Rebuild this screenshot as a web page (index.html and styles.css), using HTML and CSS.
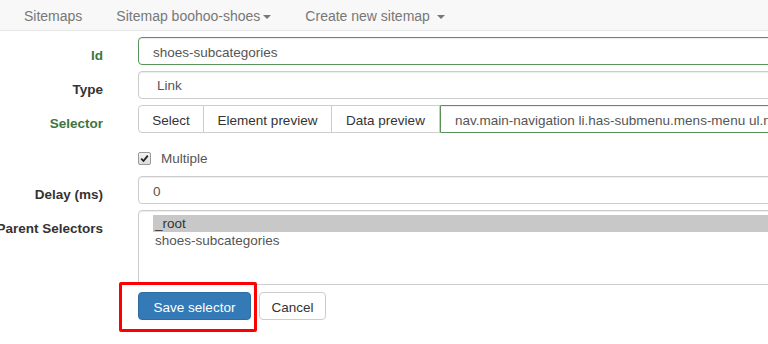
FILE: index.html
```html
<!DOCTYPE html>
<html lang="en">
<head>
<meta charset="UTF-8">
<title>Edit selector</title>
<link rel="stylesheet" href="styles.css">
</head>
<body>
<nav class="navbar">
  <a class="nav-item">Sitemaps</a>
  <a class="nav-item">Sitemap boohoo-shoes<b class="caret"></b></a>
  <a class="nav-item">Create new sitemap <b class="caret"></b></a>
</nav>

<form class="selector-form">
  <div class="form-group has-success">
    <label class="control-label">Id</label>
    <input class="form-control" type="text" value="shoes-subcategories">
  </div>

  <div class="form-group">
    <label class="control-label">Type</label>
    <div class="form-control type-select">Link</div>
  </div>

  <div class="form-group has-success">
    <label class="control-label">Selector</label>
    <div class="input-group">
      <button type="button" class="btn-seg first">Select</button>
      <button type="button" class="btn-seg">Element preview</button>
      <button type="button" class="btn-seg">Data preview</button>
      <input class="form-control seg-input" type="text" value="nav.main-navigation li.has-submenu.mens-menu ul.nav-sub li a">
    </div>
  </div>

  <div class="form-group check-group">
    <span></span>
    <label class="checkbox">
      <span class="check-box">
        <svg width="9" height="9" viewBox="0 0 9 9"><path d="M1.2 4.6 L3.5 7 L7.8 1.6" fill="none" stroke="#222" stroke-width="1.8"/></svg>
      </span>
      Multiple
    </label>
  </div>

  <div class="form-group">
    <label class="control-label">Delay (ms)</label>
    <input class="form-control" type="text" value="0">
  </div>

  <div class="form-group">
    <label class="control-label">Parent Selectors</label>
    <div class="form-control option-list">
      <div class="option selected">_root</div>
      <div class="option">shoes-subcategories</div>
    </div>
  </div>

  <div class="form-group button-row">
    <span></span>
    <div class="actions">
      <span class="highlight"><button type="button" class="btn btn-primary">Save selector</button></span>
      <button type="button" class="btn btn-default">Cancel</button>
    </div>
  </div>
</form>
</body>
</html>
```

FILE: styles.css
```css
* { box-sizing: border-box; margin: 0; padding: 0; }
html, body { width: 768px; height: 344px; overflow: hidden; }
body { font-family: 'Liberation Sans', Arial, sans-serif; font-size: 13.5px; color: #333; background: #fff; }

.navbar { height: 31px; background: #f8f8f8; border-bottom: 1px solid #e7e7e7; display: flex; align-items: center; padding: 1px 0 0 7px; }
.nav-item { padding: 0 17px; font-size: 14px; color: #777; line-height: 30px; white-space: nowrap; }
.caret { display: inline-block; width: 0; height: 0; margin-left: 3px; vertical-align: middle; border-top: 4px solid #777; border-left: 4px solid transparent; border-right: 4px solid transparent; }

.selector-form { width: 900px; margin-left: -16px; padding-top: 6px; }
.form-group { display: grid; grid-template-columns: 119px 1fr; column-gap: 35px; margin-bottom: 6px; }
.control-label { text-align: right; font-weight: bold; line-height: 18px; padding-top: 10px; white-space: nowrap; direction: rtl; }
.has-success .control-label { color: #3c763d; }

.form-control { display: block; width: 100%; height: 28px; padding: 2px 14px 0; font-family: inherit; font-size: 13.5px; color: #555; background: #fff; border: 1px solid #ccc; border-radius: 4px; box-shadow: inset 0 1px 1px rgba(0,0,0,.075); line-height: 24px; }
.has-success .form-control { border-color: #5a935a; }
.type-select { padding-left: 18px; }

.input-group { display: flex; height: 28px; }
.btn-seg { height: 28px; padding: 2px 0 0; background: #fff; border: 1px solid #ccc; border-left: none; font-family: inherit; font-size: 13.5px; color: #333; white-space: nowrap; text-align: center; }
.btn-seg.first { border-left: 1px solid #ccc; border-radius: 4px 0 0 4px; width: 66px; }
.btn-seg:nth-child(2) { width: 128px; }
.btn-seg:nth-child(3) { width: 108px; }
.has-success .seg-input { flex: 1; width: auto; border-radius: 0 4px 4px 0; }

.check-group { height: 31px; padding-top: 9px; margin-bottom: 6px; }
.checkbox { display: flex; align-items: center; gap: 10px; height: 20px; color: #555; }
.check-box { width: 13px; height: 13px; border: 1px solid #999; border-radius: 2px; background: linear-gradient(#f4f4f4, #dcdcdc); display: flex; align-items: center; justify-content: center; }

.option-list { height: 75px; padding: 4px 0 0 14px; line-height: 17px; }
.option { padding-left: 2px; color: #555; }
.option.selected { background: #c8c8c8; color: #333; }

.button-row { margin-top: 7px; }
.actions { display: flex; gap: 8px; }
.highlight { position: relative; display: inline-flex; }
.highlight::after { content: ''; position: absolute; top: -10px; left: -19px; right: -6px; bottom: -12px; border: 3px solid #f00; border-radius: 2px; }
.btn { height: 28px; padding: 2px 0 0; font-family: inherit; font-size: 13.5px; border-radius: 4px; border: 1px solid transparent; white-space: nowrap; }
.btn-primary { width: 113px; background: #337ab7; border-color: #2e6da4; color: #fff; }
.btn-default { width: 67px; background: #fff; border-color: #ccc; color: #333; }
```
